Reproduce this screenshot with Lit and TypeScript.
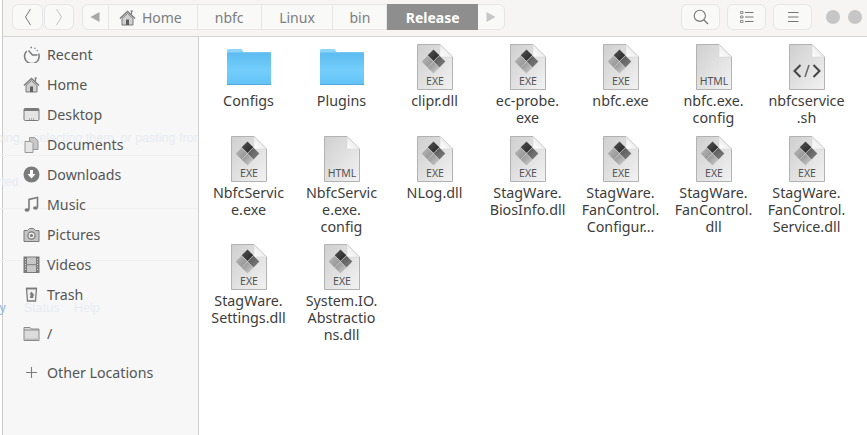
import { LitElement, html, css, svg } from "lit";
import { customElement } from "lit/decorators.js";

const folderIcon = html`<svg class="ficon" viewBox="0 0 48 48" width="48" height="48">
  <defs><linearGradient id="fg" x1="0" y1="0" x2="0" y2="1"><stop offset="0" stop-color="#5dbbf0"/><stop offset=".55" stop-color="#73cefb"/><stop offset="1" stop-color="#63c2f5"/></linearGradient></defs>
  <path d="M2 7.500C2 6.500 2.600 6 3.500 6h12c1 0 1.500.5 2 1.300l1 1.700h26c1 0 1.500.5 1.500 1.500V41c0 1-.5 1-1.500 1h-41C2.500 42 2 42 2 41z" fill="#8fd5f9"/>
  <path d="M2 10.500c0-.7.400-1 1-1h42c.6 0 1 .3 1 1V41c0 .7-.5 1-1.500 1h-41C2.500 42 2 41.700 2 41z" fill="url(#fg)"/>
  <rect x="2" y="41" width="44" height="1" fill="#4fa9dd"/>
</svg>`;

const page = (inner: unknown) => html`<svg class="ficon" viewBox="0 0 48 48" width="48" height="48">
  <defs>
    <linearGradient id="pg" x1="0" y1="0" x2="1" y2="1"><stop offset="0" stop-color="#cfcfcf"/><stop offset="1" stop-color="#f2f2f2"/></linearGradient>
    <linearGradient id="pf" x1="0" y1="1" x2="1" y2="0"><stop offset="0" stop-color="#fff"/><stop offset="1" stop-color="#dedede"/></linearGradient>
    <linearGradient id="dt" x1="0" y1="0" x2="1" y2="1"><stop offset="0" stop-color="#555"/><stop offset="1" stop-color="#222"/></linearGradient>
    <linearGradient id="dl" x1="0" y1="0" x2="1" y2="1"><stop offset="0" stop-color="#b8b8b8"/><stop offset="1" stop-color="#8f8f8f"/></linearGradient>
    <linearGradient id="dr" x1="0" y1="0" x2="1" y2="1"><stop offset="0" stop-color="#555"/><stop offset="1" stop-color="#808080"/></linearGradient>
    <linearGradient id="db" x1="0" y1="0" x2="1" y2="1"><stop offset="0" stop-color="#8a8a8a"/><stop offset="1" stop-color="#cfcfcf"/></linearGradient>
  </defs>
  <path d="M6.500 1.500H29L41.500 14V46.500H6.500Z" fill="url(#pg)" stroke="#b2b2b2"/>
  <path d="M29 1.500V14H41.500Z" fill="url(#pf)" stroke="#d0d0d0" stroke-width=".5"/>
  ${inner}
</svg>`;

const tag = (t: string) => svg`<text x="24" y="42" text-anchor="middle" font-size="10.500" fill="#555" font-family="Noto Sans, sans-serif">${t}</text>`;

const exeIcon = page(svg`
  <path d="M22.500 6.500l5.800 5.800-5.800 5.800-5.800-5.800z" fill="url(#dt)"/>
  <path d="M16.500 12.800l5.800 5.800-5.800 5.800-5.800-5.800z" fill="url(#dl)"/>
  <path d="M28.500 12.800l5.800 5.800-5.800 5.800-5.800-5.800z" fill="url(#dr)"/>
  <path d="M22.500 19l5.800 5.800-5.800 5.800-5.800-5.800z" fill="url(#db)"/>
  ${tag("EXE")}`);
const htmlIcon = page(tag("HTML"));
const shIcon = page(svg`
  <path d="M17.500 22l-6 6 6 6M30.500 22l6 6-6 6" fill="none" stroke="#444" stroke-width="2"/>
  <path d="M26 22l-4 12" fill="none" stroke="#666" stroke-width="1.500"/>`);

type Kind = "f" | "e" | "h" | "s";
const files: [Kind, string[]][] = [
  ["f", ["Configs"]], ["f", ["Plugins"]], ["e", ["clipr.dll"]], ["e", ["ec-probe.", "exe"]], ["e", ["nbfc.exe"]], ["h", ["nbfc.exe.", "config"]], ["s", ["nbfcservice", ".sh"]],
  ["e", ["NbfcServic", "e.exe"]], ["h", ["NbfcServic", "e.exe.", "config"]], ["e", ["NLog.dll"]], ["e", ["StagWare.", "BiosInfo.dll"]], ["e", ["StagWare.", "FanControl.", "Configur…"]], ["e", ["StagWare.", "FanControl.", "dll"]], ["e", ["StagWare.", "FanControl.", "Service.dll"]],
  ["e", ["StagWare.", "Settings.dll"]], ["e", ["System.IO.", "Abstractio", "ns.dll"]],
];

const g = "#7b7b7b";
const homeGlyph = svg`<path d="M1 9.500L8.500 2.500 16 9.500" fill="none" stroke="${g}" stroke-width="1.500"/><path d="M12.500 2v3.500M11.500 2h2.500" fill="none" stroke="${g}" stroke-width="1.200"/><path d="M3 9.500V16h11V9.500L8.500 4.500z" fill="#d0d0d0" stroke="${g}"/><rect x="7" y="10.500" width="3" height="5.500" fill="#5f5f5f"/>`;

const sideIcons: Record<string, unknown> = {
  Recent: svg`<path d="M3.800 5A7.300 7.300 0 1 0 15.600 7.500" fill="none" stroke="${g}" stroke-width="1.500"/><path d="M7.500 1.500h1.500M11.500 2l1 .6M14 4.200l.6.900" stroke="${g}" stroke-width="1.400" fill="none"/><path d="M5.500 4.500l4 4.500h5" fill="none" stroke="${g}" stroke-width="1.500"/>`,
  Home: homeGlyph,
  Desktop: svg`<rect x="1" y="2.500" width="15" height="12" rx="1.200" fill="#e4e4e4" stroke="${g}"/><rect x="1" y="2.500" width="15" height="2.500" fill="${g}"/><path d="M6 13h1M8 13h1M10 13h1" stroke="${g}"/>`,
  Documents: svg`<path d="M6.500 1.500h5l3.500 3.500v8.500H6.500z" fill="#c8c8c8" stroke="#999"/><path d="M2 5.500h6l2 2v9H2z" fill="#e6e6e6" stroke="#999"/>`,
  Downloads: svg`<circle cx="8.500" cy="8.500" r="8" fill="${g}"/><path d="M7 4h3v4h2.500l-4 4.500-4-4.500H7z" fill="#fff"/>`,
  Music: svg`<path d="M6 13.500V3.500L14.500 1.500v10" fill="none" stroke="${g}" stroke-width="1.600"/><ellipse cx="4" cy="14" rx="2.500" ry="1.800" fill="${g}"/><ellipse cx="12.500" cy="12" rx="2.500" ry="1.800" fill="${g}"/>`,
  Pictures: svg`<path d="M1 4.500h3.500l2-2h4l2 2H16v11H1z" fill="#c4c4c4" stroke="${g}"/><circle cx="8.500" cy="9.500" r="3.600" fill="#eee" stroke="${g}" stroke-width="1.300"/><circle cx="8.500" cy="9.500" r="1.600" fill="${g}"/>`,
  Videos: svg`<rect x="1" y="1" width="15" height="15.500" fill="#c8c8c8" stroke="${g}"/><rect x="1" y="1" width="3" height="15.500" fill="${g}"/><rect x="13" y="1" width="3" height="15.500" fill="${g}"/><path d="M4 8.700h9" stroke="${g}"/><path d="M2.500 3v12M14.500 3v12" stroke="#ddd" stroke-dasharray="1 1.500"/>`,
  Trash: svg`<path d="M3.500 2.500h10L12.500 15H4.500z" fill="#f2f2f2" stroke="${g}" stroke-width="1.300"/><path d="M3 2.500h11" stroke="${g}" stroke-width="1.500"/><path d="M8.500 5.500l-2 3h1.300l-1 3.500h3.500v-2.500h1.200z" fill="${g}"/>`,
  "/": svg`<path d="M1 2.500h6l1.500 1.500H16v11.500H1z" fill="#dcdcdc" stroke="#8a8a8a"/><path d="M1 5h15" stroke="#8a8a8a"/><rect x="1.500" y="13.500" width="14" height="1.500" fill="#bbb"/>`,
  "Other Locations": svg`<path d="M8.500 3v11M3 8.500h11" stroke="${g}" stroke-width="1.100" fill="none"/>`,
};

const places: { name: string; cls: string }[] = [
  { name: "Recent", cls: "" }, { name: "Home", cls: "" }, { name: "Desktop", cls: "" },
  { name: "Documents", cls: "" }, { name: "Downloads", cls: "" }, { name: "Music", cls: "" },
  { name: "Pictures", cls: "" }, { name: "Videos", cls: "" }, { name: "Trash", cls: "" },
  { name: "/", cls: "gap9" }, { name: "Other Locations", cls: "gap9" },
];

const crumbs: { t: string; w: number; cls?: string; home?: boolean }[] = [
  { t: "Home", w: 89, cls: "homeseg", home: true }, { t: "nbfc", w: 64 }, { t: "Linux", w: 72 }, { t: "bin", w: 54 },
];

const ghosts: { t: string; cls: string }[] = [
  { t: "ping,", cls: "g1" }, { t: "selecting them, or pasting from", cls: "g2" },
  { t: "rted", cls: "g3" }, { t: "ty", cls: "g4" }, { t: "Status", cls: "g5" }, { t: "Help", cls: "g6" },
];

@customElement("file-item")
class FileItem extends LitElement {
  static properties = { kind: {}, lines: { type: Array } };
  kind: Kind = "e";
  lines: string[] = [];
  static styles = css`
    :host { display: flex; flex-direction: column; align-items: center; }
    .ficon { display: block; }
    .label { margin-top: 1px; text-align: center; font: 14.300px/17px "Noto Sans", sans-serif; color: #3d3d3d; white-space: nowrap; }
  `;
  render() {
    const ic = this.kind === "f" ? folderIcon : this.kind === "e" ? exeIcon : this.kind === "h" ? htmlIcon : shIcon;
    return html`${ic}<div class="label">${this.lines.map((l) => html`<div>${l}</div>`)}</div>`;
  }
}

@customElement("app-root")
export class AppRoot extends LitElement {
  static styles = css`
    :host { display: block; width: 867px; height: 435px; overflow: hidden; position: relative; background: #fff; font-family: "Noto Sans", sans-serif; }
    .win { height: 100%; display: flex; flex-direction: column; margin-left: 2px; border-left: 1px solid #cbcbcb; box-sizing: border-box; }
    header { flex: none; display: flex; align-items: flex-start; padding-top: 4px; box-sizing: border-box; padding-left: 9px; background: #f6f5f4; border-bottom: 1px solid #d4d4d4; height: 37px; }
    .btn { box-sizing: border-box; height: 26px; border: 1px solid #e6e6e6; border-radius: 6px; background: #f9f9f8; display: flex; align-items: center; justify-content: center; }
    .back { width: 31px; margin-right: 1px; }
    .fwd { width: 30px; margin-right: 8px; }
    .path { display: flex; height: 26px; width: 423px; box-sizing: border-box; border: 1px solid #e6e6e6; border-radius: 6px; background: #f9f9f8; }
    .seg { box-sizing: border-box; height: 100%; display: flex; align-items: center; justify-content: center; gap: 6px; border-right: 1px solid #e6e6e6; font-size: 14px; color: #7d7d7d; }
    .homeseg { padding-right: 5px; }
    .arrow { width: 26px; }
    .cur { width: 91px; height: 26px; margin: -1px 0; background: #8e8e8e; color: #fff; font-weight: 700; border-right: 0; }
    .end { width: 26px; border-right: 0; }
    .spacer { flex: 1; }
    .tool { width: 39px; margin-right: 7px; }
    .dots { display: flex; gap: 8px; padding: 6px 5px 0 7px; }
    .dot { width: 14px; height: 14px; border-radius: 50%; background: #c6c6c6; }
    .body { flex: 1; display: flex; min-height: 0; }
    aside { width: 196px; flex: none; box-sizing: border-box; background: #f7f7f7; border-right: 1px solid #cfcfcf; padding-top: 2px; }
    .place { position: relative; z-index: 2; display: flex; align-items: center; gap: 7px; height: 30px; padding-left: 20px; font-size: 14.200px; color: #555; }
    .place svg { flex: none; }
    .gap9 { margin-top: 9px; }
    main { flex: 1; padding: 6px 0 0 3px; display: grid; grid-template-columns: repeat(7, 93px); grid-template-rows: 92px 108px 100px; background: #fff; }
    .ghosts { position: absolute; left: 0; top: 37px; width: 198px; height: 398px; overflow: hidden; z-index: 1; }
    .ghost { position: absolute; white-space: nowrap; font: 12.500px/16px "Liberation Sans", sans-serif; color: #e8ecf1; }
    .g1 { left: -4px; top: 93px; }
    .g2 { left: 33px; top: 93px; }
    .g3 { left: -3px; top: 137px; }
    .g4 { left: -4px; top: 263px; color: #8ab8e6; }
    .g5 { left: 24px; top: 263px; }
    .g6 { left: 74px; top: 263px; }
    .rule { position: absolute; left: 0; width: 100%; height: 1px; background: #f1f1f1; }
    .r1 { top: 118px; }
    .r2 { top: 171px; }
    .r3 { top: 223px; }
  `;
  render() {
    return html`<div class="win">
      <header>
        <div class="btn back"><svg width="12" height="18" viewBox="0 0 12 18"><path d="M8.500 1L3.500 9l5 8" fill="none" stroke="#777" stroke-width="1"/></svg></div>
        <div class="btn fwd"><svg width="12" height="18" viewBox="0 0 12 18"><path d="M3.500 1l5 8-5 8" fill="none" stroke="#c0c0c0" stroke-width="1"/></svg></div>
        <div class="path">
          <div class="seg arrow"><svg width="10" height="12" viewBox="0 0 10 12"><path d="M9.500 1v10L.5 6z" fill="#a8a8a8"/></svg></div>
          ${crumbs.map((c) => html`<div class="seg ${c.cls ?? ""}" style="width:${c.w}px">${c.home ? html`<svg width="17" height="17" viewBox="0 0 17 17">${homeGlyph}</svg>` : ""}<span>${c.t}</span></div>`)}
          <div class="seg cur">Release</div>
          <div class="seg end"><svg width="10" height="12" viewBox="0 0 10 12"><path d="M.5 1v10L9.500 6z" fill="#c6c6c6"/></svg></div>
        </div>
        <div class="spacer"></div>
        <div class="btn tool"><svg width="16" height="16" viewBox="0 0 16 16"><circle cx="6.800" cy="6.800" r="5.600" fill="none" stroke="#777" stroke-width="1.100"/><path d="M11 11l4 4" stroke="#777" stroke-width="1.300"/></svg></div>
        <div class="btn tool"><svg width="14" height="14" viewBox="0 0 14 14"><path d="M.5 1.500h2.500v2H.5zM.5 6h2.500v2H.5zM.5 10.500h2.500v2H.5z" fill="none" stroke="#777" stroke-width=".8"/><path d="M5 2.500h8.500M5 7h8.500M5 11.500h8.500" stroke="#777"/></svg></div>
        <div class="btn tool"><svg width="14" height="14" viewBox="0 0 14 14"><path d="M2 2.500h10.500M2 7h10.500M2 11.500h10.500" stroke="#777"/></svg></div>
        <div class="dots"><div class="dot"></div><div class="dot"></div></div>
      </header>
      <div class="body">
        <aside>
          ${places.map((p) => html`<div class="place ${p.cls}"><svg width="17" height="17" viewBox="0 0 17 17">${sideIcons[p.name]}</svg><span>${p.name}</span></div>`)}
        </aside>
        <main>
          ${files.map(([k, l]) => html`<file-item .kind=${k} .lines=${l}></file-item>`)}
        </main>
      </div>
    </div>
    <div class="ghosts">
      <div class="rule r1"></div><div class="rule r2"></div><div class="rule r3"></div>
      ${ghosts.map((x) => html`<div class="ghost ${x.cls}">${x.t}</div>`)}
    </div>`;
  }
}
